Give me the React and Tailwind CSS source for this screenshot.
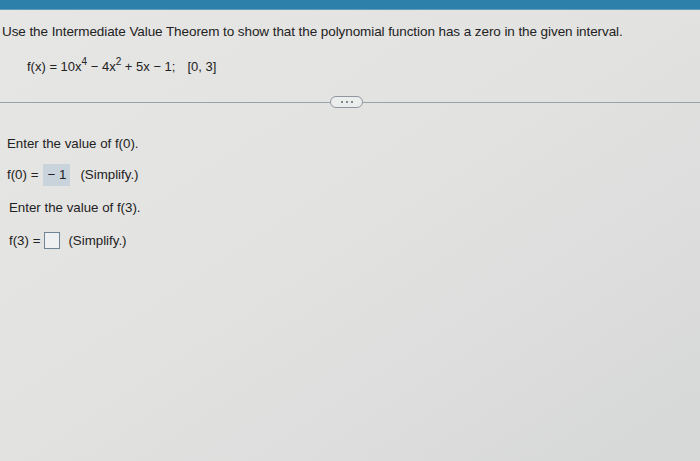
import React from 'react';

const Ellipsis = () => (
  <div className="flex items-center justify-center gap-[3px] w-[33px] h-[12px] rounded-full border border-[#8f969e] bg-[#eceeee]">
    <span className="w-[2px] h-[2px] rounded-full bg-[#5d6670]" />
    <span className="w-[2px] h-[2px] rounded-full bg-[#5d6670]" />
    <span className="w-[2px] h-[2px] rounded-full bg-[#5d6670]" />
  </div>
);

const App = () => {
  return (
    <div
      className="w-[700px] h-[461px] overflow-hidden flex flex-col bg-gradient-to-br from-[#e6e6e4] via-[#e2e2e1] to-[#d6d7d7] text-[#222]"
      style={{ fontFamily: '"Liberation Sans", Arial, sans-serif' }}
    >
      {/* Top bar */}
      <div className="h-[10px] bg-[#2c80a9] border-b border-[#5c9dbc]" />

      {/* Question */}
      <div className="pl-[2px] pt-[13px] text-[13.5px] tracking-[-0.08px] leading-[17px]">
        Use the Intermediate Value Theorem to show that the polynomial function has a zero in the given interval.
      </div>
      <div className="pl-[27px] pt-[19px] text-[13px] leading-[16px] flex items-end">
        <span>
          f(x) = 10x<sup className="text-[10px] relative -top-[6px]">4</sup> − 4x<sup className="text-[10px] relative -top-[6px]">2</sup> + 5x − 1;
        </span>
        <span className="ml-[12px]">[0, 3]</span>
      </div>

      {/* Divider */}
      <div className="mt-[21px] flex items-center">
        <div className="w-[330px] h-px bg-[#9ba1a8]" />
        <Ellipsis />
        <div className="flex-1 h-px bg-[#9ba1a8]" />
      </div>

      {/* Answers */}
      <div className="pl-[7px] pt-[28px] text-[13.3px] leading-[16px] flex flex-col">
        <div>Enter the value of f(0).</div>
        <div className="mt-[12px] flex items-center">
          <span>f(0) =</span>
          <span className="ml-[5px] w-[27px] h-[22px] bg-[#c8d3db] flex items-center justify-center">− 1</span>
          <span className="ml-[10px]">(Simplify.)</span>
        </div>
        <div className="mt-[14px] pl-[2px]">Enter the value of f(3).</div>
        <div className="mt-[16px] pl-[2px] flex items-center">
          <span>f(3) =</span>
          <span className="ml-[4px] w-[16px] h-[17px] border border-[#6f8596] bg-[#eef0f1]" />
          <span className="ml-[8px]">(Simplify.)</span>
        </div>
      </div>
    </div>
  );
};

export default App;
